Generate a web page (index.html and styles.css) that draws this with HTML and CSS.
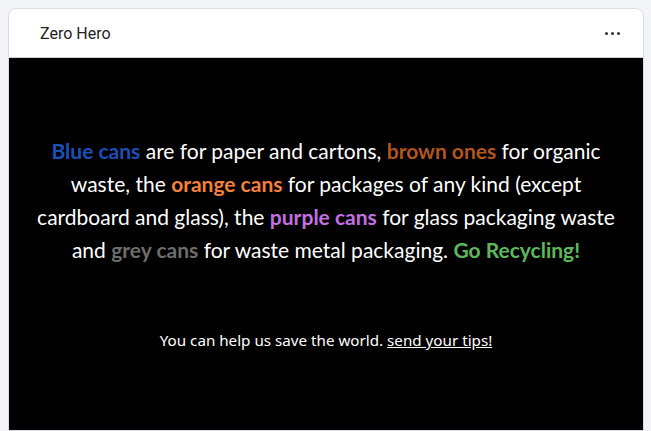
FILE: index.html
```html
<!DOCTYPE html>
<html>
<head>
<meta charset="utf-8">
<link rel="stylesheet" href="styles.css">
</head>
<body>
<div class="card">
  <div class="card-header">
    <span class="title">Zero Hero</span>
    <span class="menu" aria-label="more"><i></i><i></i><i></i></span>
  </div>
  <div class="card-body">
    <p class="lead"><b class="blue">Blue cans</b> are for paper and cartons, <b class="brown">brown ones</b> for organic<br>waste, the <b class="orange">orange cans</b> for packages of any kind (except<br>cardboard and glass), the <b class="purple">purple cans</b> for glass packaging waste<br>and <b class="grey">grey cans</b> for waste metal packaging. <b class="green">Go Recycling!</b></p>
    <p class="note">You can help us save the world. <a href="#">send your tips!</a></p>
  </div>
</div>
</body>
</html>
```
FILE: styles.css
```css
html, body { margin: 0; padding: 0; }
body {
  background: #f3f4f8;
  padding: 8px 7px 2px 8px;
  height: 431px;
  box-sizing: border-box;
  font-family: Roboto, "Liberation Sans", sans-serif;
}
.card {
  height: 421px;
  border: 1px solid #d9dce3;
  border-radius: 8px 8px 0 0;
  background: #fff;
  display: flex;
  flex-direction: column;
  overflow: hidden;
}
.card-header {
  height: 49px;
  flex: none;
  display: flex;
  align-items: center;
  justify-content: space-between;
  padding: 0 23px 0 31px;
  border-bottom: 1px solid #cfd2d8;
  box-sizing: border-box;
}
.title { font-size: 16px; color: #222; }
.menu { display: flex; gap: 3px; }
.menu i { width: 3px; height: 3px; border-radius: 50%; background: #333; display: block; }
.card-body {
  flex: 1;
  background: #000;
  color: #fff;
  display: flex;
  flex-direction: column;
  align-items: center;
  padding: 76px 10px 0;
}
.lead {
  margin: 0;
  font-family: Lato, "Noto Sans", sans-serif;
  font-size: 21px;
  line-height: 33px;
  text-align: center;
  white-space: nowrap;
}
.lead b { font-weight: 700; }
.blue { color: #1d4fb8; }
.brown { color: #b3561c; }
.orange { color: #f6813b; }
.purple { color: #c46fe2; }
.grey { color: #6d6d6d; }
.green { color: #5cb85c; }
.note {
  margin: 64px 0 0;
  font-family: "Noto Sans", "Open Sans", sans-serif;
  font-size: 15.2px;
  text-align: center;
}
.note a { color: #fff; }
```
